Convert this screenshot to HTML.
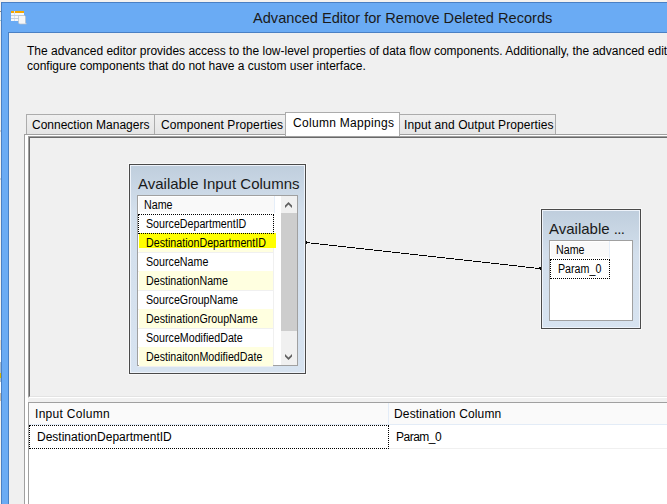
<!DOCTYPE html>
<html><head><meta charset="utf-8">
<style>
*{margin:0;padding:0;box-sizing:border-box}
html,body{width:667px;height:504px;overflow:hidden;background:#f4f2ef;font-family:"Liberation Sans",sans-serif;color:#000}
.a{position:absolute}
#win{left:1px;top:2px;width:700px;height:520px;background:#6aabf4;border:1px solid #4a80c4}
#title{left:253px;top:10px;font-size:14.6px;line-height:17px;color:#1a1a1a;white-space:nowrap}
#client{left:8px;top:32px;width:700px;height:520px;background:#f0f0f0;border-left:1px solid #4a80c4;border-top:1px solid #4a80c4}
.t{white-space:nowrap;font-size:12px;line-height:14px}
.tab{height:20px;border:1px solid #acacac;border-bottom:none;background:linear-gradient(#f0f0f0,#e5e5e5)}
.tab span{position:absolute;top:3px;font-size:12px;line-height:14px;white-space:nowrap}
#page{left:24px;top:134px;width:700px;height:400px;background:#fff;border-left:1px solid #a0a0a0;border-top:1px solid #a0a0a0}
#panel{left:28px;top:136px;width:700px;height:262px;background:#f0f0f0;border-left:1px solid #a0a0a0;border-top:1px solid #a0a0a0;border-bottom:1px solid #fff}
#panel:before{content:"";position:absolute;left:0;top:0;right:0;bottom:0;border-left:1px solid #696969;border-top:1px solid #696969;border-bottom:1px solid #e3e3e3}
.box{border:1px solid #4a4a4a;background:linear-gradient(#bfcedd 0px,#d3dfec 45px,#d7e3f0 100%)}
.box:before{content:"";position:absolute;left:0;top:0;right:0;bottom:0;border:1px solid #eef3fa}
.box:after{content:"";position:absolute;left:-2px;top:-2px;right:-2px;bottom:-2px;border:1px solid #f8f8f8}
.list{background:#fff;border:1px solid #a0a0a0}
.hdr{background:#f9f9f9}
.li{font-size:12px;line-height:14px;white-space:nowrap;transform:scaleX(0.89);transform-origin:0 0}
.cap{font-size:15px;line-height:17px;white-space:nowrap;color:#1a1a1a}
.dot{border:1px dotted #000}
#grid{left:28px;top:402px;width:700px;height:120px;background:#fff;border-left:1px solid #a0a0a0;border-top:1px solid #a0a0a0}
</style></head><body>
<div id="win" class="a"></div>
<div class="a" style="left:0;top:11px;width:1px;height:1px;background:#8a8a8a"></div><div class="a" style="left:0;top:20px;width:1px;height:1px;background:#9cc8d0"></div><div class="a" style="left:0;top:130px;width:1px;height:2px;background:#cfcfcf"></div><div class="a" style="left:0;top:178px;width:1px;height:2px;background:#cfcfcf"></div><div class="a" style="left:0;top:340px;width:1px;height:10px;background:#e2d9cc"></div><div class="a" style="left:0;top:350px;width:1px;height:12px;background:#ffffff"></div><div class="a" style="left:0;top:362px;width:1px;height:11px;background:#a8bcd0"></div><div class="a" style="left:0;top:373px;width:1px;height:5px;background:#d8b800"></div><div class="a" style="left:0;top:378px;width:1px;height:4px;background:#a8bcd0"></div><div class="a" style="left:0;top:382px;width:1px;height:11px;background:#ffffff"></div><div class="a" style="left:0;top:393px;width:1px;height:8px;background:#c8bca8"></div>
<svg class="a" style="left:10px;top:10px" width="18" height="16" viewBox="0 0 18 16">
  <rect x="1" y="1" width="3" height="2" fill="#f7a800"/>
  <rect x="5" y="1" width="9" height="2" fill="#f7a800"/>
  <rect x="4" y="1" width="1" height="10" fill="#d8e2ee"/>
  <rect x="1" y="3" width="3" height="8" fill="#f6f8fb"/>
  <rect x="5" y="3" width="9" height="8" fill="#f6f8fb"/>
  <path d="M1 5.5h13M1 8.5h13" stroke="#c4d0de" stroke-width="1"/>
  <path d="M8.5 5.5h6l1 1v6.5l1 1h-7l-1-1z" fill="#f4f6f8" stroke="#b4bec8" stroke-width="0.7"/>
</svg>
<div id="title" class="a">Advanced Editor for Remove Deleted Records</div>
<div id="client" class="a"></div>
<div class="a t" style="left:27px;top:44px">The advanced editor provides access to the low-level properties of data flow components. Additionally, the advanced editor can be used to</div>
<div class="a t" style="left:27px;top:59px">configure components that do not have a custom user interface.</div>

<div id="page" class="a"></div>
<div class="a tab" style="left:26px;top:114px;width:129px"><span style="left:5px">Connection Managers</span></div>
<div class="a tab" style="left:154px;top:114px;width:132px"><span style="left:6px;letter-spacing:0.1px">Component Properties</span></div>
<div class="a tab" style="left:399px;top:114px;width:157px"><span style="left:4px;letter-spacing:0.08px">Input and Output Properties</span></div>
<div class="a tab" style="left:285px;top:112px;width:115px;height:24px;background:#fff"><span style="left:7px;top:3px;letter-spacing:0.3px">Column Mappings</span></div>

<div id="panel" class="a"></div>

<div class="a box" style="left:129px;top:164px;width:177px;height:210px"></div>
<div class="a cap" style="left:138px;top:175px">Available Input Columns</div>
<div class="a list" style="left:137px;top:195px;width:161px;height:171px"></div>
<div class="a hdr" style="left:139px;top:197px;width:135px;height:15px"></div>
<div class="a" style="left:274px;top:196px;width:1px;height:17px;background:#e5eef9"></div>
<div class="a li" style="left:144px;top:198px">Name</div>
<div class="a" style="left:138px;top:233px;width:135px;height:1px;background:#f0f0f0"></div>
<div class="a" style="left:139px;top:233px;width:134px;height:19px;background:#ffffe0"></div>
<div class="a" style="left:138px;top:252px;width:135px;height:1px;background:#f0f0f0"></div>
<div class="a" style="left:138px;top:271px;width:135px;height:1px;background:#f0f0f0"></div>
<div class="a" style="left:139px;top:271px;width:134px;height:19px;background:#ffffe0"></div>
<div class="a" style="left:138px;top:290px;width:135px;height:1px;background:#f0f0f0"></div>
<div class="a" style="left:138px;top:309px;width:135px;height:1px;background:#f0f0f0"></div>
<div class="a" style="left:139px;top:309px;width:134px;height:19px;background:#ffffe0"></div>
<div class="a" style="left:138px;top:328px;width:135px;height:1px;background:#f0f0f0"></div>
<div class="a" style="left:138px;top:347px;width:135px;height:1px;background:#f0f0f0"></div>
<div class="a" style="left:139px;top:347px;width:134px;height:19px;background:#ffffe0"></div>
<div class="a" style="left:138px;top:366px;width:135px;height:1px;background:#f0f0f0"></div>
<div class="a" style="left:273px;top:214px;width:1px;height:151px;background:#f0f0f0"></div>
<div class="a" style="left:139px;top:233px;width:137px;height:15px;background:#ffff00"></div>
<div class="a dot" style="left:138px;top:214px;width:136px;height:20px"></div>
<div class="a li" style="left:146px;top:217px">SourceDepartmentID</div>
<div class="a li" style="left:146px;top:236px">DestinationDepartmentID</div>
<div class="a li" style="left:146px;top:255px">SourceName</div>
<div class="a li" style="left:146px;top:274px">DestinationName</div>
<div class="a li" style="left:146px;top:293px">SourceGroupName</div>
<div class="a li" style="left:146px;top:312px">DestinationGroupName</div>
<div class="a li" style="left:146px;top:331px">SourceModifiedDate</div>
<div class="a li" style="left:146px;top:350px">DestinaitonModifiedDate</div>
<!-- scrollbar -->
<div class="a" style="left:281px;top:196px;width:16px;height:169px;background:#f0f0f0"></div>
<div class="a" style="left:281px;top:213px;width:16px;height:118px;background:#cdcdcd"></div>
<svg class="a" style="left:281px;top:196px" width="16" height="169">
  <path d="M4 12L7.5 8.5L11 12V9.5L7.5 6L4 9.5Z" fill="#606060"/>
  <path d="M4 158L7.5 161.5L11 158V160.5L7.5 164L4 160.5Z" fill="#606060"/>
</svg>

<div class="a box" style="left:541px;top:209px;width:100px;height:120px"></div>
<div class="a cap" style="left:549px;top:220px">Available <span style="letter-spacing:-0.7px">...</span></div>
<div class="a list" style="left:549px;top:240px;width:84px;height:81px"></div>
<div class="a hdr" style="left:551px;top:242px;width:58px;height:15px"></div>
<div class="a" style="left:609px;top:241px;width:1px;height:17px;background:#e5eef9"></div>
<div class="a li" style="left:556px;top:243px">Name</div>
<div class="a dot" style="left:550px;top:259px;width:60px;height:20px"></div>
<div class="a li" style="left:558px;top:262px">Param_0</div>

<svg class="a" style="left:0;top:0" width="667" height="504" shape-rendering="crispEdges"><g fill="#000"><rect x="306" y="242" width="4" height="1"/><rect x="311" y="243" width="8" height="1"/><rect x="320" y="244" width="8" height="1"/><rect x="329" y="245" width="8" height="1"/><rect x="338" y="246" width="8" height="1"/><rect x="347" y="247" width="8" height="1"/><rect x="356" y="248" width="8" height="1"/><rect x="365" y="249" width="8" height="1"/><rect x="374" y="250" width="8" height="1"/><rect x="383" y="251" width="8" height="1"/><rect x="392" y="252" width="8" height="1"/><rect x="401" y="253" width="8" height="1"/><rect x="410" y="254" width="8" height="1"/><rect x="419" y="255" width="8" height="1"/><rect x="428" y="256" width="8" height="1"/><rect x="437" y="257" width="8" height="1"/><rect x="446" y="258" width="8" height="1"/><rect x="455" y="259" width="8" height="1"/><rect x="464" y="260" width="8" height="1"/><rect x="473" y="261" width="8" height="1"/><rect x="482" y="262" width="8" height="1"/><rect x="491" y="263" width="8" height="1"/><rect x="500" y="264" width="8" height="1"/><rect x="509" y="265" width="8" height="1"/><rect x="518" y="266" width="7" height="1"/><rect x="526" y="267" width="8" height="1"/><rect x="535" y="268" width="5" height="1"/><path d="M306 241h1v1h1v1h-1v1h-1z"/><path d="M539 267h2v3h-1v-1h-1z"/></g></svg>

<div class="a" style="left:28px;top:398px;width:640px;height:4px;background:#f0f0f0"></div>
<div id="grid" class="a"></div>
<div class="a" style="left:29px;top:403px;width:640px;height:21px;background:#fafafa"></div>
<div class="a" style="left:29px;top:424px;width:640px;height:1px;background:#e3ecf7"></div>
<div class="a" style="left:388px;top:403px;width:1px;height:21px;background:#e3ecf7"></div>
<div class="a" style="left:389px;top:448px;width:280px;height:1px;background:#f0f0f0"></div>
<div class="a dot" style="left:29px;top:425px;width:360px;height:24px"></div>
<div class="a t" style="left:35px;top:407px;letter-spacing:0.3px">Input Column</div>
<div class="a t" style="left:394px;top:407px;letter-spacing:0.15px">Destination Column</div>
<div class="a t" style="left:37px;top:430px">DestinationDepartmentID</div>
<div class="a t" style="left:396px;top:430px;letter-spacing:-0.5px">Param_0</div>
</body></html>
